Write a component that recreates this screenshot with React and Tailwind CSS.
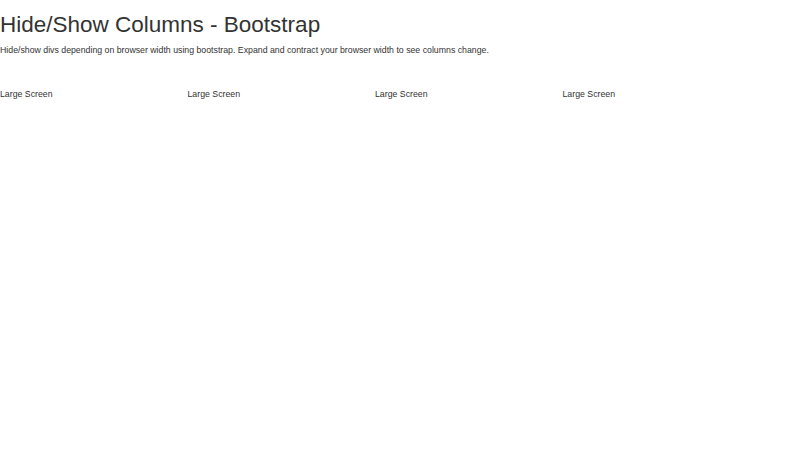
export default function App() {
  return (
    <div className="bg-white min-h-[450px] text-[#333] font-['Liberation_Sans',Arial,sans-serif]">
      <h1 className="text-[22.5px] leading-[24.75px] pt-[12.5px]">Hide/Show Columns - Bootstrap</h1>
      <p className="text-[8.75px] leading-[12.5px] mt-[6.25px]">
        Hide/show divs depending on browser width using bootstrap. Expand and contract your browser width to see columns change.
      </p>
      <div className="grid grid-cols-4 w-[750px] mt-[31.5px] text-[8.75px] leading-[12.5px]">
        <div>Large Screen</div>
        <div>Large Screen</div>
        <div>Large Screen</div>
        <div>Large Screen</div>
      </div>
    </div>
  );
}
